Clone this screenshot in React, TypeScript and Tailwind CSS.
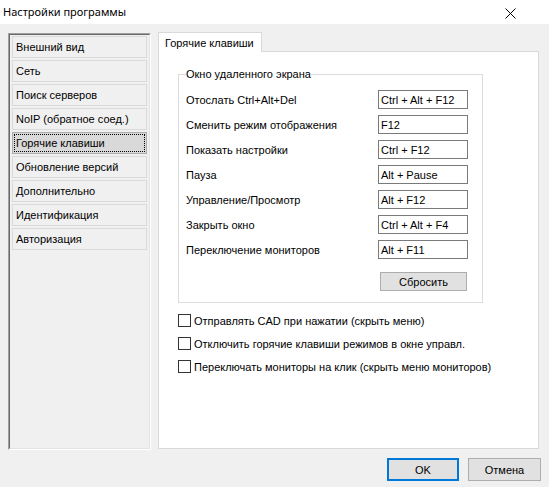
import React from "react";

const menu = [
  "Внешний вид",
  "Сеть",
  "Поиск серверов",
  "NoIP (обратное соед.)",
  "Горячие клавиши",
  "Обновление версий",
  "Дополнительно",
  "Идентификация",
  "Авторизация",
];

const hotkeys = [
  ["Отослать Ctrl+Alt+Del", "Ctrl + Alt + F12"],
  ["Сменить режим отображения", "F12"],
  ["Показать настройки", "Ctrl + F12"],
  ["Пауза", "Alt + Pause"],
  ["Управление/Просмотр", "Alt + F12"],
  ["Закрыть окно", "Ctrl + Alt + F4"],
  ["Переключение мониторов", "Alt + F11"],
];

const options = [
  "Отправлять CAD при нажатии (скрыть меню)",
  "Отключить горячие клавиши режимов в окне управл.",
  "Переключать мониторы на клик (скрыть меню мониторов)",
];

export default function App() {
  return (
    <div className="w-[549px] h-[487px] bg-[#f0f0f0] flex flex-col text-[11px] leading-[14px] text-black font-['Liberation_Sans',Arial,sans-serif]">
      {/* title bar */}
      <div className="h-[24px] bg-white flex items-center justify-between pl-[3px] pr-[33px] shrink-0">
        <span className="text-[11px] font-['Noto_Sans',sans-serif]">Настройки программы</span>
        <svg width="11" height="11" viewBox="0 0 11 11" className="mt-[2px]">
          <path d="M0.5 0.5 L10.5 10.5 M10.5 0.5 L0.5 10.5" stroke="#000" strokeWidth="1" />
        </svg>
      </div>

      <div className="flex pt-[8px] pl-[8px]">
        {/* left list */}
        <div className="mt-[1px] w-[143px] h-[417px] border-t border-l border-[#a0a0a0] border-b-white border-r-white border-b border-r">
          <div className="h-full border-t border-l border-[#696969] border-b-[#e3e3e3] border-r-[#e3e3e3] border-b border-r pl-[2px] pr-[2px] pt-[1px] flex flex-col gap-[2px]">
            {menu.map((item) => {
              const active = item === "Горячие клавиши";
              return active ? (
                <div key={item} className="h-[22px] border border-[#adadad] bg-[#d9d9d9] p-[1px]">
                  <div className="h-full border border-dotted border-black flex items-center pl-[1px]">{item}</div>
                </div>
              ) : (
                <div key={item} className="h-[22px] border border-[#dadada] flex items-center pl-[3px]">
                  {item}
                </div>
              );
            })}
          </div>
        </div>

        {/* right side */}
        <div className="ml-[7px] w-[381px] flex flex-col">
          <div className="w-[104px] h-[20px] bg-white border border-b-0 border-[#d9d9d9] flex items-center pl-[6px] whitespace-nowrap relative z-10 -mb-px">
            Горячие клавиши
          </div>
          <div className="h-[398px] bg-white border border-[#d9d9d9] pl-[19px] pt-[15px]">
            <fieldset className="w-[305px] border border-[#dcdcdc] px-[7px] pt-[6px] pb-[11px]">
              <legend className="leading-[14px]">Окно удаленного экрана</legend>
              <div className="flex flex-col">
                {hotkeys.map(([label, key]) => (
                  <div key={label} className="h-[25px] flex items-center justify-between pr-[7px]">
                    <span>{label}</span>
                    <div className="w-[90px] h-[19px] border border-[#7a7a7a] flex items-center pl-[2px] bg-white">{key}</div>
                  </div>
                ))}
              </div>
              <div className="flex justify-end pr-[8px] mt-[10px]">
                <div className="w-[87px] h-[19px] bg-[#e1e1e1] border border-[#adadad] flex items-center justify-center">
                  Сбросить
                </div>
              </div>
            </fieldset>

            <div className="mt-[6px] flex flex-col">
              {options.map((o) => (
                <div key={o} className="h-[23px] flex items-center">
                  <div className="w-[13px] h-[13px] border border-[#333] bg-white shrink-0" />
                  <span className="ml-[3px]">{o}</span>
                </div>
              ))}
            </div>
          </div>
        </div>
      </div>

      {/* bottom buttons */}
      <div className="flex justify-end gap-[9px] pr-[8px] mt-[8px]">
        <div className="w-[72px] h-[23px] bg-[#e1e1e1] border-2 border-[#0078d7] flex items-center justify-center">OK</div>
        <div className="w-[73px] h-[23px] bg-[#e1e1e1] border border-[#adadad] flex items-center justify-center">Отмена</div>
      </div>
    </div>
  );
}
